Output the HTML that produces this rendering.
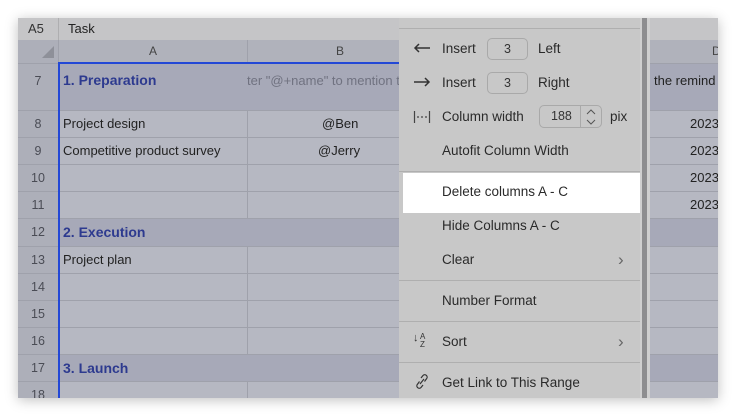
<!DOCTYPE html>
<html><head><style>
*{margin:0;padding:0;box-sizing:border-box}
body{width:736px;height:417px;background:#fff;position:relative;overflow:hidden;font-family:"Liberation Sans",sans-serif;}
.a{position:absolute}
.win{left:18px;top:18px;width:700px;height:380px;overflow:hidden;box-shadow:0 2px 12px rgba(0,0,0,.25);background:#b6b8c2}
.t{position:absolute;font-size:13px;color:#222;white-space:nowrap}
.rn{position:absolute;left:0;width:40px;text-align:center;font-size:12.5px;color:#4a4c55}
.hl{position:absolute;left:0;width:700px;height:1px;background:#9fa1ab}
.blue{color:#2d3a8f;font-weight:bold;font-size:14px}
.mi{position:absolute;left:43px;font-size:13.5px;color:#2a2a2a;white-space:nowrap}
.box{position:absolute;border:1px solid #a9a9a9;border-radius:5px;text-align:center;font-size:12.5px;color:#333}
.sep{position:absolute;left:0;width:241px;height:1px;background:#afafaf}
.chev{position:absolute;left:219px;font-size:17px;color:#666;line-height:17px}
</style></head><body>
<div class="a win">
 <div class="a" style="left:0;top:0;width:700px;height:22px;background:#c5c5c7"></div>
 <div class="a" style="left:40px;top:0;width:1px;height:22px;background:#aeaeb0"></div>
 <div class="t" style="left:10px;top:3px;color:#333">A5</div>
 <div class="t" style="left:50px;top:3px;color:#222">Task</div>
 <div class="a" style="left:0;top:22px;width:700px;height:23px;background:#b0b2bb"></div>
 <div class="a" style="left:0;top:22px;width:40px;height:358px;background:#adafb9"></div>
 <div class="a" style="left:24px;top:28px;width:0;height:0;border-left:12px solid transparent;border-bottom:12px solid #8e9099"></div>
 <div class="t" style="left:131px;top:26px;font-size:12px;color:#444">A</div>
 <div class="t" style="left:318px;top:26px;font-size:12px;color:#444">B</div>
 <div class="t" style="left:694px;top:26px;font-size:12px;color:#444">D</div>
 <div class="a" style="left:40px;top:22px;width:1px;height:358px;background:#9fa1ab"></div>
 <div class="a" style="left:229px;top:22px;width:1px;height:358px;background:#9fa1ab"></div>
 <div class="a" style="left:41px;top:45px;width:660px;height:47px;background:#a7a9b8"></div>
 <div class="a" style="left:41px;top:200px;width:660px;height:28px;background:#a7a9b8"></div>
 <div class="a" style="left:41px;top:336px;width:660px;height:27px;background:#a7a9b8"></div>
 <div class="hl" style="top:45px"></div>
 <div class="hl" style="top:92px"></div><div class="hl" style="top:119px"></div><div class="hl" style="top:146px"></div><div class="hl" style="top:173px"></div><div class="hl" style="top:200px"></div><div class="hl" style="top:228px"></div><div class="hl" style="top:255px"></div><div class="hl" style="top:282px"></div><div class="hl" style="top:309px"></div><div class="hl" style="top:336px"></div><div class="hl" style="top:363px"></div>
 <div class="rn" style="top:56px">7</div><div class="rn" style="top:99px">8</div><div class="rn" style="top:126px">9</div><div class="rn" style="top:153px">10</div><div class="rn" style="top:180px">11</div><div class="rn" style="top:207px">12</div><div class="rn" style="top:235px">13</div><div class="rn" style="top:262px">14</div><div class="rn" style="top:289px">15</div><div class="rn" style="top:316px">16</div><div class="rn" style="top:343px">17</div><div class="rn" style="top:370px">18</div>
 <div class="t blue" style="left:45px;top:54px">1. Preparation</div>
 <div class="t" style="left:229px;top:55px;color:#707280">ter "@+name" to mention t</div>
 <div class="t" style="left:45px;top:98px">Project design</div>
 <div class="t" style="left:304px;top:98px">@Ben</div>
 <div class="t" style="left:45px;top:125px">Competitive product survey</div>
 <div class="t" style="left:300px;top:125px">@Jerry</div>
 <div class="t blue" style="left:45px;top:206px">2. Execution</div>
 <div class="t" style="left:45px;top:234px">Project plan</div>
 <div class="t blue" style="left:45px;top:342px">3. Launch</div>
 <div class="t" style="left:636px;top:55px">the remind</div>
 <div class="t" style="left:672px;top:98px">2023</div><div class="t" style="left:672px;top:125px">2023</div><div class="t" style="left:672px;top:152px">2023</div><div class="t" style="left:672px;top:179px">2023</div>
 <div class="a" style="left:40px;top:44px;width:2px;height:336px;background:#2348d6"></div>
 <div class="a" style="left:40px;top:44px;width:342px;height:2px;background:#2348d6"></div>
 <div class="a" style="left:381px;top:0;width:241px;height:380px;background:#c8c8c8">
  <div class="sep" style="top:10px"></div>
  <svg class="a" style="left:14px;top:25px" width="18" height="10"><path d="M17 5H2M6 1L2 5l4 4" stroke="#333" stroke-width="1.5" fill="none"/></svg>
  <div class="mi" style="top:23px">Insert</div>
  <div class="box" style="left:88px;top:20px;width:41px;height:22px;line-height:20px">3</div>
  <div class="mi" style="left:139px;top:23px">Left</div>
  <svg class="a" style="left:14px;top:59px" width="18" height="10"><path d="M1 5h15M12 1l4 4-4 4" stroke="#333" stroke-width="1.5" fill="none"/></svg>
  <div class="mi" style="top:57px">Insert</div>
  <div class="box" style="left:88px;top:54px;width:41px;height:22px;line-height:20px">3</div>
  <div class="mi" style="left:139px;top:57px">Right</div>
  <svg class="a" style="left:14px;top:92px" width="18" height="14"><path d="M1.5 1v12M16.5 1v12M4 7h2M8 7h2M12 7h2" stroke="#444" stroke-width="1.2" fill="none"/></svg>
  <div class="mi" style="top:91px">Column width</div>
  <div class="box" style="left:140px;top:87px;width:63px;height:23px;line-height:21px;text-align:left;padding-left:11px">188</div>
  <div class="a" style="left:181px;top:88px;width:1px;height:21px;background:#a9a9a9"></div>
  <svg class="a" style="left:185px;top:89px" width="14" height="20"><path d="M3 7l4-4 4 4M3 13l4 4 4-4" stroke="#555" stroke-width="1" fill="none"/></svg>
  <div class="mi" style="left:211px;top:91px">pix</div>
  <div class="mi" style="top:125px">Autofit Column Width</div>
  <div class="sep" style="top:153px"></div>
  <div class="a" style="left:4px;top:155px;width:237px;height:40px;background:#fff"></div>
  <div class="mi" style="top:166px">Delete columns A - C</div>
  <div class="mi" style="top:200px">Hide Columns A - C</div>
  <div class="mi" style="top:234px">Clear</div>
  <div class="chev" style="top:233px">&#x203A;</div>
  <div class="sep" style="top:262px"></div>
  <div class="mi" style="top:275px">Number Format</div>
  <div class="sep" style="top:303px"></div>
  <div class="a" style="left:14px;top:315px;font-size:11px;line-height:11px;color:#333">&#8595;<span style="position:absolute;left:7px;top:0;font-size:8px;line-height:8px">A</span><span style="position:absolute;left:7px;top:8px;font-size:8px;line-height:8px">Z</span></div>
  <div class="mi" style="top:316px">Sort</div>
  <div class="chev" style="top:315px">&#x203A;</div>
  <div class="sep" style="top:344px"></div>
  <svg class="a" style="left:16px;top:356px" width="14" height="15"><path d="M6 4l2-2.5a2.4 2.4 0 013.5 3.3L9.5 7.5M8 11l-2 2.5a2.4 2.4 0 01-3.5-3.3L4.5 7.5M5 10l4-5" stroke="#333" stroke-width="1.2" fill="none"/></svg>
  <div class="mi" style="top:357px">Get Link to This Range</div>
 </div>
 <div class="a" style="left:622px;top:0;width:10px;height:380px;background:#d0d0d0"></div>
 <div class="a" style="left:624px;top:0;width:5px;height:380px;background:#8e8e90"></div>
</div>
</body></html>
